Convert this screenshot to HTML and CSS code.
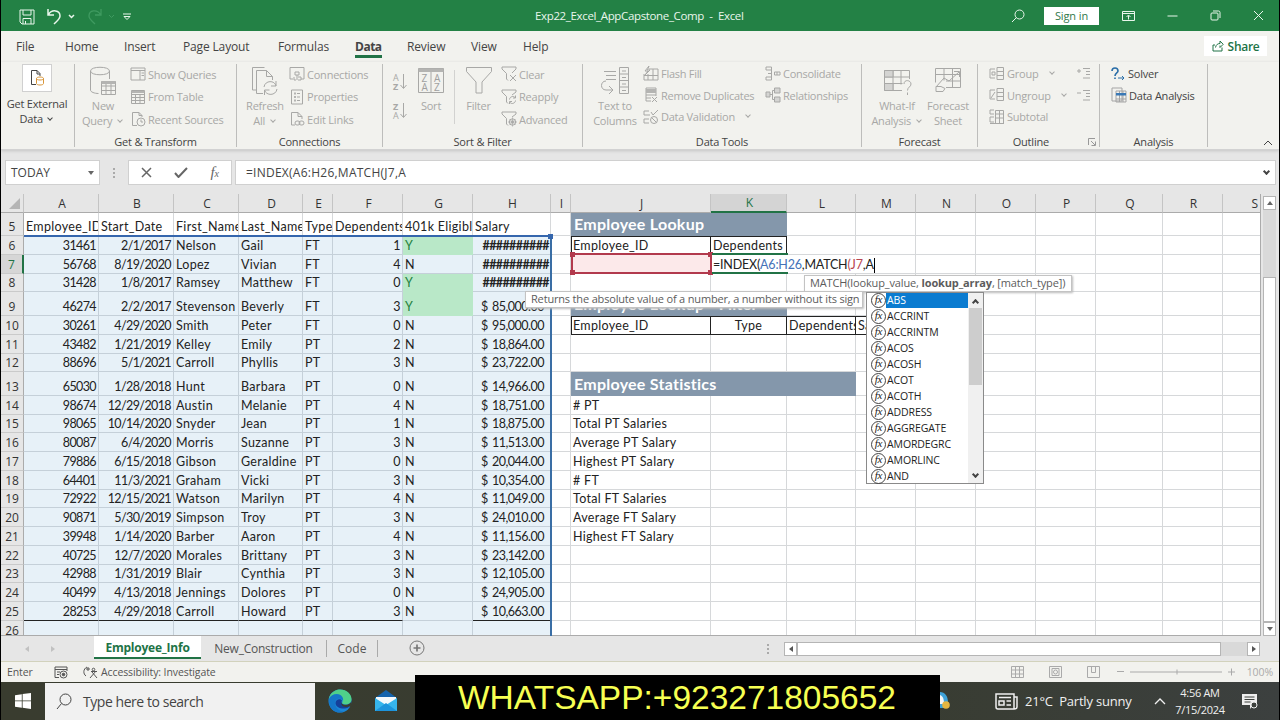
FILE: index.html
```html
<!DOCTYPE html>
<html lang="en">
<head>
    <meta charset="UTF-8">
    <title>Exp22_Excel_AppCapstone_Comp - Excel</title>
    <link rel="stylesheet" href="styles.css">
</head>
<body>
<div class="window">

    <!-- Title bar -->
    <header class="titlebar">
        <div class="quick">
            <svg width="16" height="16" viewBox="0 0 16 16"><path d="M1 1h14v14H3l-2-2zM4 1v5h8V1M4 15V9.500h8V15M6.500 15v-3"/></svg>
            <svg class="undo" width="15" height="17" viewBox="0 0 15 17"><path d="M1 1v6h6M1.500 6.500C5 1 13 2 13 8c0 3-3 5-6 8" stroke-width="1.500"/></svg>
            <svg class="small" width="7" height="5" viewBox="0 0 7 5"><path d="M1 1l2.500 2.500L6 1" stroke-width="1.500"/></svg>
            <svg class="redo" width="15" height="17" viewBox="0 0 15 17"><path d="M14 1v6H8M13.500 6.500C10 1 2 2 2 8c0 3 3 5 6 8" stroke-width="1.300"/></svg>
            <svg class="redo" width="7" height="5" viewBox="0 0 7 5"><path d="M1 1l2.500 2.500L6 1"/></svg>
            <svg class="more" width="8" height="8" viewBox="0 0 8 8"><path d="M0 1h8M1 3.500h6L4 6.500z"/></svg>
        </div>
        <div class="doc-name">Exp22_Excel_AppCapstone_Comp&nbsp; -&nbsp; Excel</div>
        <div class="win-tools">
            <svg width="14" height="14" viewBox="0 0 14 14"><circle cx="8.500" cy="5.500" r="4.500"/><path d="M5.500 8.500L1 13"/></svg>
            <button class="signin">Sign in</button>
            <svg width="13" height="10" viewBox="0 0 13 10"><path d="M.5.500h12v9H.5zM.5 2.500h12M6.500 8.500v-4M4.500 6l2-2 2 2"/></svg>
            <svg width="11" height="10" viewBox="0 0 11 10"><path d="M.5 5h10"/></svg>
            <svg width="11" height="11" viewBox="0 0 11 11"><rect x="1" y="3" width="7" height="7" rx="1"/><path d="M3 1h5.500q1.500 0 1.500 1.500V8"/></svg>
            <svg width="11" height="11" viewBox="0 0 11 11"><path d="M1 1l9 9M10 1l-9 9"/></svg>
        </div>
    </header>

    <!-- Tabs -->
    <nav class="tabs">
        <span>File</span><span>Home</span><span>Insert</span><span>Page Layout</span><span>Formulas</span>
        <span><b class="active">Data</b></span><span>Review</span><span>View</span><span>Help</span>
        <button class="share">
            <svg width="12" height="12" viewBox="0 0 12 12"><path d="M3 5H1v6h9V7.500M3.500 7.500C4 4.500 6 3.500 8 3.500V1l3.200 3.300L8 7.500V5.500"/></svg>
            Share
        </button>
    </nav>

    <!-- Ribbon -->
    <div class="ribbon">
        <section class="group g-external">
            <div class="body">
                <div class="big on">
                    <div class="boxed"><svg width="15" height="18" viewBox="0 0 15 18"><path d="M6 15.500H1.500v-14H7l3 3V7M7 1.500v3.500h3"/><path class="orange" d="M6.500 9.500v5c0 2 7 2 7 0v-5c0-2-7-2-7 0c0 2 7 2 7 0"/></svg></div>
                    <span>Get External<br>Data <i class="chev"></i></span>
                </div>
            </div>
            <h6></h6>
        </section>

        <section class="group g-transform">
            <div class="body">
                <div class="big">
                    <svg width="28" height="32" viewBox="0 0 28 32"><path d="M1.500 5v19c0 2 4 3.500 8 3.500M20.500 5v8M1.500 5c0-5 19-5 19 0c0 5-19 5-19 0M12.500 15.500h14v13h-14zM12.500 20h14M12.500 24.500h14M17 15.500v13M22 15.500v13"/><path class="fill" d="M12.500 15h14v3h-14z"/></svg>
                    <span>New<br>Query <i class="chev"></i></span>
                </div>
                <div class="list">
                    <div><svg width="16" height="16" viewBox="0 0 16 16"><path d="M1 2h14v12H1zM1 4.500h14M10 4.500V14M11.500 7H14M11.500 9.500H14"/></svg>Show Queries</div>
                    <div><svg width="16" height="16" viewBox="0 0 16 16"><path d="M1.500 1.500h13v13h-13zM1.500 5.500h13M1.500 8.500h13M1.500 11.500h13M5.500 5.500v9M10 5.500v9"/><path class="fill" d="M1.500 2h13v2h-13z"/></svg>From Table</div>
                    <div><svg width="16" height="16" viewBox="0 0 16 16"><path d="M7 14.500H2.500v-13H9l3 3V6M9 1.500v3h3"/><circle cx="11" cy="11" r="4"/><path d="M11 8.500V11h2"/></svg>Recent Sources</div>
                </div>
            </div>
            <h6>Get &amp; Transform</h6>
        </section>

        <section class="group g-connections">
            <div class="body">
                <div class="big">
                    <svg width="28" height="32" viewBox="0 0 28 32"><path d="M5 24H1.500V1.500h12M12 27.500H5.500v-23h10l6 6V14M15.500 4.500v6h6M13 21c1-7 11-7 12-1M25 15v5h-5M26 23c-1 7-11 7-12.500 1M13.500 29v-5h5"/></svg>
                    <span>Refresh<br>All <i class="chev"></i></span>
                </div>
                <div class="list">
                    <div><svg width="16" height="16" viewBox="0 0 16 16"><path d="M4 13H1V1.500h14V13h-3M5 11v3h2M9 11h3v3H9M6 6h4v3H6zM8 9v5"/></svg>Connections</div>
                    <div><svg width="16" height="16" viewBox="0 0 16 16"><path d="M2.500 1h11v14h-11zM8 4.500h3M8 8h3M8 11.500h3"/><path class="fill" d="M5 3.500h2v2H5zM5 7h2v2H5zM5 10.500h2v2H5z"/></svg>Properties</div>
                    <div><svg width="16" height="16" viewBox="0 0 16 16"><path d="M6 14H2.500V1.500H9l4 4V8M9 1.500v4h4"/><rect x="6" y="10" width="5" height="4" rx="2"/><rect x="10" y="10" width="5" height="4" rx="2"/></svg>Edit Links</div>
                </div>
            </div>
            <h6>Connections</h6>
        </section>

        <section class="group g-sort">
            <div class="body">
                <div class="az">
                    <div><span>A<br><b>Z</b></span><svg width="7" height="16" viewBox="0 0 7 16"><path d="M3.500 0v14M.5 11l3 3.500 3-3.500"/></svg></div>
                    <div><span><b>Z</b><br>A</span><svg width="7" height="16" viewBox="0 0 7 16"><path d="M3.500 0v14M.5 11l3 3.500 3-3.500"/></svg></div>
                </div>
                <div class="big sort">
                    <svg width="28" height="32" viewBox="0 0 28 32"><path d="M1.500 2.500h25v24h-25zM14 6v20.500"/><path class="fill" d="M1.500 2.500h25V6h-25z"/><g class="letters"><text x="4.500" y="15.500">Z</text><text x="4.500" y="25">A</text><text x="17" y="15.500">A</text><text x="17" y="25">Z</text></g></svg>
                    <span>Sort</span>
                </div>
                <div class="thin"></div>
                <div class="big filter">
                    <svg width="28" height="32" viewBox="0 0 28 32"><path d="M1.500 1.500h25v4L17 16v11h-6V16L1.500 5.500z"/></svg>
                    <span>Filter</span>
                </div>
                <div class="list">
                    <div><svg width="16" height="16" viewBox="0 0 16 16"><path d="M7 14.500L5.500 13V7.500L1 3V1h14v2l-4 4M9 9l6 6M15 9l-6 6"/></svg>Clear</div>
                    <div><svg width="16" height="16" viewBox="0 0 16 16"><path d="M7 14.500L5.500 13V7.500L1 3V1h14v2l-4 3M14.500 9c-2-3-6-1-6 1.500M14.500 6.500V9H12M8.500 13c2 3 6 1 6-1.500M8.500 15v-2.500H11"/></svg>Reapply</div>
                    <div><svg width="16" height="16" viewBox="0 0 16 16"><path d="M7 14.500L5.500 13V7.500L1 3V1h14v2l-4 3"/><circle cx="11.500" cy="11" r="3.200"/><circle cx="11.500" cy="11" r="1"/><path d="M11.500 6.500v9M7 11h9M8.500 8l6 6M14.500 8l-6 6" stroke-width=".7"/></svg>Advanced</div>
                </div>
            </div>
            <h6>Sort &amp; Filter</h6>
        </section>

        <section class="group g-tools">
            <div class="body">
                <div class="big">
                    <svg width="30" height="32" viewBox="0 0 30 32"><path d="M4 5.500h12M6 9.500h10M6 13.500h10M6 15c-6 0-6 9 0 9h6M9 20l4 4-4 4M19.500 1.500h9v26h-9zM19.500 8h9M19.500 14.500h9M19.500 21h9M22 5h4M22 11.500h4M22 18h4M22 24.500h4"/></svg>
                    <span>Text to<br>Columns</span>
                </div>
                <div class="list">
                    <div><svg width="16" height="16" viewBox="0 0 16 16"><path d="M6 3h9v11H1V8M5 14V8M10 3v11M1 9.500h14M6 0L2 5h3L2 9l5-5H4.500z"/></svg>Flash Fill</div>
                    <div><svg width="16" height="16" viewBox="0 0 16 16"><path d="M8 14H3V1h10v8M3 8h10M3 11h5M9 10l5 5M14 10l-5 5"/><path class="fill" d="M3 2h10v4H3z"/></svg>Remove Duplicates</div>
                    <div class="wide"><svg width="16" height="16" viewBox="0 0 16 16"><path d="M6 2H1v4h6M6 10H1v4h5M8 3l2 3 5-5"/><circle cx="11" cy="11" r="3.500"/><path d="M8.500 8.500l5 5"/></svg>Data Validation <i class="chev"></i></div>
                </div>
                <div class="list second">
                    <div><svg width="16" height="16" viewBox="0 0 16 16"><path d="M1 1h5.500v13H1M1 1v3h5.500M1 14v-3h5.500M3 7.500h4M9.500 6h5.500v3H9.500zM12 6v3"/></svg>Consolidate</div>
                    <div><svg width="16" height="16" viewBox="0 0 16 16"><path class="gray" d="M1 5h4v5H1zM9.500 1H15v5H9.500zM9.500 10H15v5H9.500z"/><path d="M5 7.500h2.500M9.500 3.500h-2v9h2"/></svg>Relationships</div>
                </div>
            </div>
            <h6>Data Tools</h6>
        </section>

        <section class="group g-forecast">
            <div class="body">
                <div class="big">
                    <svg width="29" height="32" viewBox="0 0 29 32"><path d="M19 24.500H1.500v-20h25V13M1.500 11h25M1.500 17.500h18M10 4.500v20M18 4.500v14M21 18c0-5 7-4 7 0c0 3-3.500 3-3.500 6.500M24.500 26.500v2.500"/><path class="gray" d="M1.500 4.500H10V11H1.500zM1.500 17.500H10v7H1.500z"/></svg>
                    <span>What-If<br>Analysis <i class="chev"></i></span>
                </div>
                <div class="big sheet-btn">
                    <svg width="28" height="32" viewBox="0 0 28 32"><path d="M1.500 2.500h25v19H12M1.500 2.500v14M1.500 8.500h25M12 15h14.500M10 2.500v12M18.500 2.500v19M2 21l8-9 5 3 10-9M20 5.500h5.500V11M2 25.500v-5h5l4 2-2 3z"/></svg>
                    <span>Forecast<br>Sheet</span>
                </div>
            </div>
            <h6>Forecast</h6>
        </section>

        <section class="group g-outline">
            <div class="body">
                <div class="list">
                    <div><svg width="16" height="16" viewBox="0 0 16 16"><path d="M6 3H1v9h5M3 6h3v3H3zM8 1.500h6.500v12H8zM8 5.500h6.500M8 9.500h6.500"/></svg>Group <i class="chev"></i></div>
                    <div><svg width="16" height="16" viewBox="0 0 16 16"><path d="M6 3H1v9h5M2 11l4-6M8 1.500h6.500v12H8zM8 5.500h6.500M8 9.500h6.500"/></svg>Ungroup <i class="chev"></i></div>
                    <div><svg width="16" height="16" viewBox="0 0 16 16"><path d="M1 1h4M1 1v4h4M1 8h4M1 8v5h4M6.500 1.500h8v13h-8zM1 14.500h14M6.500 5h8M6.500 9h8M10.500 1.500v13"/></svg>Subtotal</div>
                </div>
                <div class="plusminus">
                    <svg width="14" height="13" viewBox="0 0 14 13"><path d="M0 4h4M2 2v4M6 1.500h7M9 4.500h4M9 7.500h4M6 11h7"/></svg>
                    <svg width="14" height="13" viewBox="0 0 14 13"><path d="M0 4h4M6 1.500h7M9 4.500h4M9 7.500h4M6 11h7"/></svg>
                </div>
            </div>
            <h6>Outline <svg width="8" height="8" viewBox="0 0 8 8"><path d="M.5 7V.5H7M3 3l4 4M7.500 3.500v4h-4"/></svg></h6>
        </section>

        <section class="group g-analysis">
            <div class="body">
                <div class="list on">
                    <div><svg class="blue" width="14" height="14" viewBox="0 0 14 14"><path d="M1 4c0-4 6-4 6 0c0 2-3 2-3 5M4 10.500V12" stroke-width="1.600"/><path d="M7 11h6M11 9l2 2-2 2"/></svg>Solver</div>
                    <div><svg width="16" height="16" viewBox="0 0 16 16"><path class="light" d="M1 1h10v13H1zM5 4h10v11H5zM5 12h10M8.500 4v11M12 4v11"/><path class="bluefill" d="M5 6h10v2.500H5z"/></svg>Data Analysis</div>
                </div>
            </div>
            <h6>Analysis</h6>
        </section>
        <svg class="collapse" width="10" height="6" viewBox="0 0 10 6"><path d="M1 5l4-4 4 4"/></svg>
    </div>

    <!-- Formula bar -->
    <div class="formula-row">
        <div class="name-box">TODAY <i class="tri"></i></div>
        <div class="dots"><i></i><i></i><i></i></div>
        <div class="fx-box">
            <svg width="11" height="11" viewBox="0 0 11 11"><path d="M1 1l9 9M10 1l-9 9" stroke-width="1.500"/></svg>
            <svg width="14" height="11" viewBox="0 0 14 11"><path d="M1 6l3.500 4L13 1" stroke-width="2"/></svg>
            <em>f<small>x</small></em>
        </div>
        <div class="formula">=INDEX(A6:H26,MATCH(J7,A <i class="chev"></i></div>
    </div>

    <!-- Worksheet -->
    <div class="work">
        <div class="sheet" id="sheet"></div>
        <div class="range"><i></i></div>
        <div class="ref-cell"><i></i><i></i><i></i><i></i></div>
        <div class="edit">=INDEX(<span class="c-blue">A6:H26</span>,MATCH<span class="c-red">(J7</span>,A<i></i></div>
        <div class="tip syntax">MATCH(lookup_value, <b>lookup_array</b>, [match_type])</div>
        <div class="tip desc">Returns the absolute value of a number, a number without its sign</div>
        <div class="suggest">
            <ul id="functions"></ul>
            <div class="suggest-bar"><i class="chev up"></i><div></div><i class="chev"></i></div>
        </div>
        <div class="vscroll">
            <div class="btn"><i class="tri up"></i></div>
            <div class="track"></div>
            <div class="thumb"></div>
            <div class="btn"><i class="tri"></i></div>
        </div>
    </div>

    <!-- Sheet tabs -->
    <div class="sheet-tabs">
        <div class="nav-arrows"><i class="tri left"></i><i class="tri right"></i></div>
        <b>Employee_Info</b>
        <span class="t2">New_Construction</span>
        <span class="t3">Code</span>
        <svg class="add" width="16" height="16" viewBox="0 0 16 16"><circle cx="8" cy="8" r="7"/><path d="M8 4.500v7M4.500 8h7" stroke-width="1.700"/></svg>
        <div class="dots"><i></i><i></i><i></i></div>
        <div class="hscroll">
            <div class="btn"><i class="tri left"></i></div>
            <div class="thumb"></div>
            <div class="track"></div>
            <div class="btn"><i class="tri right"></i></div>
        </div>
    </div>

    <!-- Status bar -->
    <div class="status">
        <span class="mode">Enter</span>
        <svg width="14" height="13" viewBox="0 0 14 13"><path d="M5 11.500H1V1h12v4M1 3.500h12M3 6h3M3 8.500h2"/><circle cx="9.500" cy="8.500" r="3.500"/><circle cx="9.500" cy="8.500" r="1.300" fill="#555"/></svg>
        <svg class="acc" width="15" height="13" viewBox="0 0 15 13"><path d="M4 1C0 3 0 8 3 10M5 1v4M3 3h4M9 6l5 6M13 5l-6 7M8 5.500h6"/><circle cx="10.500" cy="3.500" r="1.300"/></svg>
        <span>Accessibility: Investigate</span>
        <div class="views">
            <svg width="13" height="12" viewBox="0 0 13 12"><path d="M.5.500h12v11H.5zM.5 4h12M.5 8h12M4.500.500v11M8.500.500v11"/></svg>
            <svg width="13" height="12" viewBox="0 0 13 12"><path d="M.5.500h12v11H.5zM3 2.500h7v7H3z"/><circle cx="6.500" cy="6" r="2"/></svg>
            <svg width="13" height="12" viewBox="0 0 13 12"><path d="M.5.500h12v11H.5zM4.500.500v6h4v-6"/></svg>
            <svg width="118" height="10" viewBox="0 0 118 10"><path d="M0 4.500h7M13 5h92M60 2.500v5M111 5h7M114.500 1.500v7"/></svg>
            <span>100%</span>
        </div>
    </div>

    <!-- Windows taskbar -->
    <footer class="taskbar">
        <div class="start"><svg width="16" height="16" viewBox="0 0 16 16"><path d="M0 2.200L6.800 1.200V7.500H0zM7.600 1.100L16 0v7.500H7.600zM0 8.300h6.800v6.400L0 13.800zM7.600 8.300H16V16l-8.400-1.200z"/></svg></div>
        <div class="search">
            <svg width="16" height="17" viewBox="0 0 16 17"><circle cx="9.500" cy="6.500" r="5.500"/><path d="M5.500 10.500L1 16"/></svg>
            Type here to search
        </div>
        <svg class="edge" width="24" height="24" viewBox="0 0 24 24">
            <circle cx="12" cy="12" r="11.500" fill="#1b86d6"/>
            <path d="M1 10C2 3 8 .5 12 .5c7 0 11.500 5 11.500 9.500c0 4-3 5.500-6 5.500c-3 0-4-1-3-2.500C16 9 12 6 8 7c-3 .5-6 2-7 3z" fill="#4fd08a"/>
            <path d="M1 10C3 5 9 4 12.500 6c2 1.500 3 3.500 2.500 5.500C13 8 7 9 7 14c0 5 5 8.500 9 8.500C7 26 0 19 1 10z" fill="#1577c9"/>
            <path d="M7.500 14c0-4 5-5 6.500-2.500c-1 2-.5 4 3 4.500c3 .3 4.500-.5 6-1.500c-1 4-4 5-7 5c-5 0-8.500-2-8.500-5.500z" fill="#15409a"/>
            <path d="M14 13c-.8 2 1 3 4 2.800c2.500-.2 4.500-1.300 5.300-3.300L24 17l-6 1c-4 0-5.500-3-4-5z" fill="#3a3d31"/>
        </svg>
        <svg class="mail" width="24" height="22" viewBox="0 0 24 22">
            <path d="M1 8L12 0l11 8v13H1z" fill="#1463ad"/>
            <path d="M2 7h20v10H2z" fill="#f4f8fb"/>
            <path d="M1 8l11 7 11-7v13H1z" fill="#36b5ec"/>
            <path d="M1 21l11-8 11 8z" fill="#1d94dc"/>
        </svg>
        <div class="banner">WHATSAPP:+923271805652</div>
        <svg class="app" width="10" height="20" viewBox="0 0 10 20"><path d="M0 1c5 0 8 4 8 11l-2 5H0z" fill="#3fa2d8"/><path d="M0 4c3 1 4 4 4 9H0z" fill="#f4f4f4"/><circle cx="6" cy="14" r="3.800" fill="#e5b53f"/></svg>
        <svg class="news" width="23" height="17" viewBox="0 0 23 17"><path d="M1 1h18v15H3q-2 0-2-2zM19 4h3v10q0 2-3 2M4 4.500h12M4 8h5v4H4zM11.500 8H16M11.500 12H16" stroke-width="1.500"/></svg>
        <span class="weather">21°C &nbsp;Partly sunny</span>
        <svg class="tray" width="12" height="7" viewBox="0 0 12 7"><path d="M1 6l5-5 5 5" stroke-width="1.300"/></svg>
        <div class="clock">4:56 AM<br>7/15/2024</div>
        <svg class="notes" width="17" height="17" viewBox="0 0 17 17"><path d="M1 1h15v11h-4l-3 4v-4H1z" fill="#eee" stroke="none"/><path d="M3.500 4h10M3.500 6.500h10M3.500 9h6" stroke="#3c403c"/><circle cx="13" cy="12" r="3" fill="#3c403c"/></svg>
    </footer>
</div>

<script>
    const letters = 'ABCDEFGHIJKLMNOPQRS'.split('');

    // first row is the header, the rest are employees
    const staff = {
        5: ['Employee_ID', 'Start_Date', 'First_Name', 'Last_Name', 'Type', 'Dependents', '401k Eligible', 'Salary'],
        6: ['31461', '2/1/2017', 'Nelson', 'Gail', 'FT', '1', 'Y', '##########'],
        7: ['56768', '8/19/2020', 'Lopez', 'Vivian', 'FT', '4', 'N', '##########'],
        8: ['31428', '1/8/2017', 'Ramsey', 'Matthew', 'FT', '0', 'Y', '##########'],
        9: ['46274', '2/2/2017', 'Stevenson', 'Beverly', 'FT', '3', 'Y', '$ 85,000.00'],
        10: ['30261', '4/29/2020', 'Smith', 'Peter', 'FT', '0', 'N', '$ 95,000.00'],
        11: ['43482', '1/21/2019', 'Kelley', 'Emily', 'PT', '2', 'N', '$ 18,864.00'],
        12: ['88696', '5/1/2021', 'Carroll', 'Phyllis', 'PT', '3', 'N', '$ 23,722.00'],
        13: ['65030', '1/28/2018', 'Hunt', 'Barbara', 'PT', '0', 'N', '$ 14,966.00'],
        14: ['98674', '12/29/2018', 'Austin', 'Melanie', 'PT', '4', 'N', '$ 18,751.00'],
        15: ['98065', '10/14/2020', 'Snyder', 'Jean', 'PT', '1', 'N', '$ 18,875.00'],
        16: ['80087', '6/4/2020', 'Morris', 'Suzanne', 'PT', '3', 'N', '$ 11,513.00'],
        17: ['79886', '6/15/2018', 'Gibson', 'Geraldine', 'PT', '0', 'N', '$ 20,044.00'],
        18: ['64401', '11/3/2021', 'Graham', 'Vicki', 'PT', '3', 'N', '$ 10,354.00'],
        19: ['72922', '12/15/2021', 'Watson', 'Marilyn', 'PT', '4', 'N', '$ 11,049.00'],
        20: ['90871', '5/30/2019', 'Simpson', 'Troy', 'PT', '3', 'N', '$ 24,010.00'],
        21: ['39948', '1/14/2020', 'Barber', 'Aaron', 'PT', '4', 'N', '$ 11,156.00'],
        22: ['40725', '12/7/2020', 'Morales', 'Brittany', 'PT', '3', 'N', '$ 23,142.00'],
        23: ['42988', '1/31/2019', 'Blair', 'Cynthia', 'PT', '3', 'N', '$ 12,105.00'],
        24: ['40499', '4/13/2018', 'Jennings', 'Dolores', 'PT', '0', 'N', '$ 24,905.00'],
        25: ['28253', '4/29/2018', 'Carroll', 'Howard', 'PT', '3', 'N', '$ 10,663.00']
    };

    // titles are merged over the next cells, null = covered cell
    const other = {
        J5: ['Employee Lookup', 'title two'], K5: null,
        J6: ['Employee_ID', 'box first top'], K6: ['Dependents', 'box top'],
        J9: ['Employee Lookup - Filter', 'title two'], K9: null,
        J10: ['Employee_ID', 'box first top'], K10: ['Type', 'box top center'], L10: ['Dependents', 'box top'], M10: ['Salary', 'box top'],
        J13: ['Employee Statistics', 'title three'], K13: null, L13: null,
        J14: ['# PT', ''], J15: ['Total PT Salaries', ''], J16: ['Average PT Salary', ''], J17: ['Highest PT Salary', ''],
        J18: ['# FT', ''], J19: ['Total FT Salaries', ''], J20: ['Average FT Salary', ''], J21: ['Highest FT Salary', '']
    };

    const sheet = document.getElementById('sheet');

    function addCell(text, clase) {
        const div = document.createElement('div');
        div.className = clase;
        const span = document.createElement('span');
        span.textContent = text;
        div.appendChild(span);
        sheet.appendChild(div);
    }

    addCell('', 'corner');
    letters.forEach(l => addCell(l, 'col-head' + (l === 'K' ? ' current' : '') + (l === 'S' ? ' last' : '')));

    for (let r = 5; r <= 26; r++) {
        addCell(r, 'row-head' + (r === 7 ? ' current' : ''));
        letters.forEach((l, c) => {
            let text = '';
            let clase = 'cell';
            if (other[l + r] === null) return;
            if (c < 8) {
                if (staff[r]) text = staff[r][c];
                if (r > 5) {
                    clase += ' in-range';
                    if (c === 0 || c === 1 || c === 5) clase += ' num';
                    if (c === 7) clase += text[0] === '#' ? ' hash' : ' money';
                    if (text === 'Y') clase += ' yes';
                }
                if (r === 25 && c !== 6) clase += ' end';
            } else if (other[l + r]) {
                text = other[l + r][0];
                clase += ' ' + other[l + r][1];
            }
            addCell(text, clase);
        });
    }

    const names = ['ABS', 'ACCRINT', 'ACCRINTM', 'ACOS', 'ACOSH', 'ACOT', 'ACOTH', 'ADDRESS', 'AGGREGATE', 'AMORDEGRC', 'AMORLINC', 'AND'];
    const list = document.getElementById('functions');
    names.forEach((name, i) => {
        const li = document.createElement('li');
        if (i === 0) li.className = 'selected';
        li.innerHTML = '<em>fx</em><span>' + name + '</span>';
        list.appendChild(li);
    });
</script>
</body>
</html>
```
FILE: styles.css
```css
* {
    box-sizing: border-box;
}

body {
    margin: 0;
    background-color: #000;
    font-family: "Open Sans", "Noto Sans", sans-serif;
    font-size: 11.5px;
    color: #444;
}

svg {
    display: block;
    flex: none;
    fill: none;
    stroke: currentColor;
}

button {
    font-family: inherit;
    border: none;
    padding: 0;
}

i {
    display: inline-block;
    font-style: normal;
}

.window {
    width: 1278px;
    height: 720px;
    margin-left: 1px;
    overflow: hidden;
    background-color: #e6e6e6;
    display: flex;
    flex-direction: column;
}

/* small arrows */
.chev {
    width: 4px;
    height: 4px;
    border-right: 1px solid currentColor;
    border-bottom: 1px solid currentColor;
    transform: rotate(45deg);
    margin: 0 2px 3px 3px;
}

.chev.up {
    transform: rotate(225deg);
}

.tri {
    border: 3.5px solid transparent;
    border-top: 4px solid #666;
    border-bottom: 0;
}

.tri.up {
    border-top: 0;
    border-bottom: 4px solid #666;
}

.tri.left {
    border: 3.5px solid transparent;
    border-right: 4px solid #555;
    border-left: 0;
}

.tri.right {
    border: 3.5px solid transparent;
    border-left: 4px solid #555;
    border-right: 0;
}

/* title bar */
.titlebar {
    height: 31px;
    flex: none;
    background-color: #238145;
    color: #e9f6ec;
    display: grid;
    grid-template-columns: 480px 1fr 270px;
    align-items: center;
}

.quick {
    display: flex;
    align-items: center;
    padding: 2px 0 0 18px;
}

.quick .undo { margin-left: 12px; }
.quick .small { margin-left: 6px; }
.quick .redo { margin-left: 12px; color: #3f9a60; }
.quick .redo + .redo { margin-left: 6px; }
.quick .more { margin-left: 8px; }

.doc-name {
    padding-left: 54px;
    letter-spacing: -0.35px;
}

.win-tools {
    display: flex;
    align-items: center;
    padding-left: 2px;
}

.signin {
    width: 55px;
    height: 18px;
    margin: 0 23px 0 19px;
    background-color: #fff;
    color: #32794b;
    font-size: 11px;
    letter-spacing: -0.1px;
}

.win-tools svg + svg { margin-left: 32px; }

/* tabs */
.tabs {
    height: 31px;
    flex: none;
    background-color: #f2f2ee;
    display: grid;
    grid-template-columns: 49px 59px 59px 95px 77px 52px 64px 52px 1fr 69px;
    padding: 0 6px 0 15px;
    font-size: 12px;
    letter-spacing: -0.15px;
    line-height: 31px;
    white-space: nowrap;
}

.active {
    display: inline-block;
    height: 27px;
    border-bottom: 3px solid #217346;
    letter-spacing: -0.5px;
}

.share {
    height: 20px;
    margin-top: 5px;
    grid-column: 10;
    width: 63px;
    background-color: #fff;
    color: #217346;
    font-size: 12px;
    font-weight: 600;
    letter-spacing: -0.3px;
    display: flex;
    align-items: center;
    justify-content: center;
    gap: 4px;
}

/* ribbon */
.ribbon {
    height: 88px;
    flex: none;
    background-color: #f2f2ee;
    display: flex;
    padding-top: 2px;
    border-bottom: 1px solid #d2d2d2;
    position: relative;
    box-shadow: 0 1px 3px #c4c4c4;
}

.group {
    height: 83px;
    border-right: 1px solid #bdbdbb;
    display: flex;
    flex-direction: column;
    flex: none;
    color: #a8a8a6;
    font-size: 11px;
    letter-spacing: -0.22px;
}

.group .body {
    display: flex;
    flex: none;
    height: 70px;
}

.group h6 {
    flex: none;
    margin: 0;
    height: 16px;
    line-height: 16px;
    text-align: center;
    font-size: 11px;
    font-weight: normal;
    letter-spacing: -0.2px;
    color: #444;
}

.g-external { width: 74px; }
.g-transform { width: 162px; }
.g-connections { width: 146px; }
.g-sort { width: 200px; }
.g-tools { width: 279px; }
.g-forecast { width: 116px; }
.g-outline { width: 122px; }
.g-analysis { width: 108px; }

.big {
    display: flex;
    flex-direction: column;
    align-items: center;
    flex: none;
    width: 56px;
    padding-top: 2px;
    text-align: center;
    line-height: 15px;
    white-space: nowrap;
}

.on {
    color: #444;
}

.g-external .big {
    width: 72px;
    padding-top: 0;
}

.boxed {
    width: 30px;
    height: 28px;
    border: 1px solid #d0d0d0;
    background-color: #fff;
    margin-bottom: 4px;
    display: flex;
    align-items: center;
    justify-content: center;
}

.orange { stroke: #d8963a; }
.fill { fill: #b4b4b2; stroke: none; }
.gray { fill: #d4d4d2; }
.blue { color: #2a6ea8; margin-right: 1px; }
.bluefill { fill: #3b79b5; stroke: none; }
.light { stroke: #a5a5a5; }

.list {
    display: flex;
    flex-direction: column;
    flex: none;
    white-space: nowrap;
    margin-top: -1px;
}

.list div {
    height: 22.5px;
    display: flex;
    align-items: center;
    gap: 2px;
}

.g-transform .big { margin-left: 1px; width: 54px; }
.g-connections .big { margin-left: 1px; width: 54px; }
.g-connections .list { margin-left: -3px; }

.az {
    width: 20px;
    margin-left: 10px;
    padding-top: 9px;
}

.az div {
    display: flex;
    align-items: center;
    gap: 2px;
    font-size: 9px;
    line-height: 9px;
    height: 29px;
    padding-bottom: 11px;
}

.sort { width: 36px; margin-left: 0; }
.letters { font: 10px "Open Sans"; fill: #a0a0a0; stroke: none; }

.thin {
    width: 1px;
    height: 54px;
    margin: 6px 0 0 5px;
    background-color: #d2d2d0;
}

.filter { width: 47px; }
.g-sort .list { margin-left: -1px; }

.g-tools .list div,
.g-outline .list div,
.g-analysis .list div {
    height: 21.6px;
}

.g-tools .big { width: 60px; margin-left: 2px; }
.g-tools .list { width: 122px; margin-left: -2px; letter-spacing: -0.28px; }
.g-tools .second { width: 90px; margin-left: 0; }
.wide .chev { margin-left: 9px; }

.g-forecast .big { width: 52px; margin-left: 9px; }
.g-forecast .sheet-btn { width: 50px; margin-left: 0; }

.g-outline .body { padding-left: 11px; }
.g-outline .list { width: 90px; }
.g-outline .list .chev { margin-left: 9px; }

.plusminus {
    display: flex;
    flex-direction: column;
    gap: 9px;
    padding-top: 3px;
    margin-left: -2px;
}

.g-outline h6 {
    display: flex;
    justify-content: flex-end;
    align-items: center;
    gap: 39px;
    padding-right: 3px;
}

.g-outline h6 svg { color: #999; }

.g-analysis .body { padding-left: 11px; }

.collapse {
    position: absolute;
    right: 6px;
    bottom: 3px;
    color: #444;
}

/* formula bar */
.formula-row {
    height: 44px;
    flex: none;
    padding: 10px 3px 9px 4px;
    display: flex;
    font-size: 12px;
    line-height: 23px;
}

.name-box,
.fx-box,
.formula {
    height: 25px;
    background-color: #fff;
    border: 1px solid #d0d0d0;
}

.name-box {
    width: 95px;
    padding: 0 5px;
    display: flex;
    justify-content: space-between;
    align-items: center;
}

.dots {
    width: 28px;
    display: flex;
    flex-direction: column;
    align-items: center;
    justify-content: center;
    gap: 2px;
}

.dots i {
    width: 2px;
    height: 2px;
    background-color: #aaa;
}

.fx-box {
    width: 104px;
    display: flex;
    align-items: center;
    justify-content: space-between;
    padding: 0 12px 0 12px;
    color: #666;
}

.fx-box em {
    font-family: "Liberation Serif", serif;
    font-size: 15px;
}

.fx-box small { font-size: 10px; }

.formula {
    flex: 1;
    margin-left: 3px;
    padding: 0 4px 0 10px;
    display: flex;
    justify-content: space-between;
    align-items: center;
    letter-spacing: 0.25px;
}

.formula .chev { width: 5px; height: 5px; border-width: 0 2px 2px 0; }

/* worksheet */
.work {
    position: relative;
    height: 442px;
    flex: none;
    font-family: Lato, "Open Sans", sans-serif;
    font-variant-ligatures: none;
}

.sheet {
    width: 1260px;
    height: 442px;
    overflow: hidden;
    display: grid;
    grid-template-columns: 23px 75px 75px 65px 64px 30px 70px 70px 78px 20px 140px 76px 69px 60px 60px 60px 60px 67px 60px 38px;
    grid-template-rows: 19px 23.2px repeat(3, 18.75px) 23.7px repeat(3, 18.75px) 23.6px repeat(13, 18.75px);
    border-bottom: 1px solid #ababab;
    border-right: 1px solid #ababab;
    font-size: 12.5px;
    letter-spacing: 0.3px;
    line-height: 17px;
    color: #222;
}

.col-head,
.row-head,
.corner {
    font-family: "Open Sans", sans-serif;
    letter-spacing: 0;
    background-color: #e6e6e6;
    display: flex;
    align-items: center;
    justify-content: center;
    color: #333;
    font-size: 12px;
}

.col-head {
    border-right: 1px solid #c4c4c4;
    border-bottom: 1px solid #ababab;
    padding-left: 2px;
}

.col-head.last {
    border-right: 0;
    justify-content: flex-end;
    padding-right: 3px;
}

.row-head {
    align-items: flex-end;
    border-bottom: 1px solid #cacaca;
    border-right: 1px solid #ababab;
}

.col-head.current {
    background-color: #d4d4d4;
    color: #217346;
    border-bottom: 2px solid #217346;
}

.row-head.current {
    background-color: #d6d6d6;
    color: #217346;
    border-right: 2px solid #217346;
}

.corner {
    border-bottom: 1px solid #ababab;
    border-right: 1px solid #c4c4c4;
}

.corner span {
    border-left: 11px solid transparent;
    border-bottom: 11px solid #b5b5b5;
    margin-left: 5px;
}

.cell {
    background-color: #fff;
    border-right: 1px solid #d6d8da;
    border-bottom: 1px solid #d6d8da;
    display: flex;
    align-items: flex-end;
    padding: 0 2px;
    overflow: hidden;
    white-space: nowrap;
    min-width: 0;
}

.cell span {
    flex: none;
}

.in-range {
    background-color: #e7f1f8;
    border-color: #c5d0d9;
}

.num {
    justify-content: flex-end;
    letter-spacing: -0.6px;
}

.money {
    justify-content: flex-end;
    padding-right: 6px;
    letter-spacing: -0.5px;
    word-spacing: 1.5px;
}

.hash {
    justify-content: flex-end;
    letter-spacing: -0.6px;
    padding-right: 1px;
    font-weight: bold;
}

.yes {
    background-color: #b9e8c8;
    border-color: #b9e8c8;
    color: #1f8040;
}

.end { border-bottom: 1px solid #222; }

.title {
    background-color: #8497ab;
    border-color: #8497ab;
    color: #fff;
    font-size: 16px;
    font-weight: bold;
    padding-left: 3px;
    align-items: center;
    letter-spacing: 0.25px;
    line-height: 20px;
}

.two { grid-column: span 2; }
.three { grid-column: span 3; }

.box {
    border-right: 1px solid #222;
    border-bottom: 1px solid #222;
}

.first { box-shadow: inset 1px 0 #222; }
.top { border-top: 1px solid #222; }
.center { justify-content: center; }

/* coloured ranges of the formula being typed */
.range {
    position: absolute;
    left: 23px;
    top: 41px;
    width: 528px;
    height: 410px;
    border-top: 2px solid #3566ad;
    border-right: 2px solid #3a6ea5;
    clip-path: inset(-4px -4px 9px 0);
}

.range i {
    position: absolute;
    right: -3px;
    top: -3px;
    width: 5px;
    height: 5px;
    background-color: #3566ad;
}

.ref-cell {
    position: absolute;
    left: 570px;
    top: 59px;
    width: 141px;
    height: 21px;
    border: 2px solid #b23a4d;
    background-color: #fce9ea;
}

.ref-cell i {
    position: absolute;
    width: 5px;
    height: 5px;
    background-color: #b23a4d;
    left: -3px;
    top: -3px;
}

.ref-cell i:nth-child(2) { left: auto; right: -3px; }
.ref-cell i:nth-child(3) { top: auto; bottom: -3px; }
.ref-cell i:nth-child(4) { left: auto; right: -3px; top: auto; bottom: -3px; }

.edit {
    position: absolute;
    left: 711px;
    top: 61px;
    height: 18px;
    line-height: 19px;
    background-color: #fff;
    color: #222;
    font-size: 12.5px;
    letter-spacing: -0.2px;
    white-space: nowrap;
    padding-left: 1px;
}

/* green outline only covers the width of the cell */
.edit::before {
    content: "";
    position: absolute;
    left: 0;
    top: -2px;
    width: 76px;
    height: 17px;
    border-top: 2px solid #217346;
    border-bottom: 2px solid #217346;
}

.edit i {
    width: 1px;
    height: 15px;
    background-color: #000;
    vertical-align: middle;
}

.c-blue { color: #4472b8; }
.c-red { color: #b8454f; }

.tip {
    position: absolute;
    height: 17px;
    line-height: 14px;
    border: 1px solid #c3c3c3;
    background-color: #fff;
    font-family: "Open Sans", sans-serif;
    font-size: 11px;
    color: #5c5c5c;
    white-space: nowrap;
    padding: 0 5px;
    box-shadow: 1px 1px 2px #bbb;
}

.syntax { left: 803px; top: 81px; width: 268px; letter-spacing: -0.14px; }
.desc { left: 524px; top: 97px; width: 338px; letter-spacing: -0.17px; }

.suggest {
    position: absolute;
    left: 865px;
    top: 98px;
    width: 118px;
    height: 192px;
    border: 1px solid #8a8a8a;
    background-color: #fff;
    display: flex;
    font-family: "Open Sans", sans-serif;
}

.suggest ul {
    list-style: none;
    margin: 0;
    padding: 0 0 0 4px;
    width: 101px;
}

.suggest li {
    height: 15.95px;
    display: flex;
    align-items: center;
    font-size: 10.5px;
    letter-spacing: -0.1px;
    color: #222;
}

.suggest em {
    width: 15px;
    height: 15px;
    border: 1px solid #444;
    border-radius: 50%;
    font: italic 11px/11px "Liberation Serif", serif;
    text-align: center;
    flex: none;
}

.suggest span {
    flex: 1;
    padding-left: 1px;
    line-height: 15px;
}

.suggest .selected span {
    background-color: #0a7bd0;
    color: #fff;
}

.suggest-bar {
    width: 15px;
    background-color: #f0f0f0;
    display: flex;
    flex-direction: column;
    align-items: center;
    color: #444;
}

.suggest-bar div {
    width: 13px;
    height: 77px;
    background-color: #cdcdcd;
    margin-bottom: auto;
}

.suggest-bar .chev {
    width: 5px;
    height: 5px;
    border-width: 0 2px 2px 0;
    margin: 0 0 6px;
}

.suggest-bar .up { margin: 7px 0 3px; }

.vscroll {
    position: absolute;
    left: 1262px;
    top: 2px;
    width: 14px;
    height: 440px;
    display: flex;
    flex-direction: column;
}

.btn {
    width: 13px;
    height: 14px;
    flex: none;
    background-color: #fff;
    border: 1px solid #b5b5b5;
    display: flex;
    align-items: center;
    justify-content: center;
}

.vscroll .track {
    height: 67px;
    background-color: #d9d9d9;
    width: 13px;
}

.vscroll .thumb {
    flex: 1;
    width: 13px;
    background-color: #fff;
    border: 1px solid #b5b5b5;
}

/* sheet tabs */
.sheet-tabs {
    height: 26px;
    flex: none;
    display: flex;
    border-bottom: 1px solid #d2d2bc;
    font-size: 12px;
    line-height: 24px;
    color: #555;
}

.nav-arrows {
    width: 93px;
    display: flex;
    align-items: center;
    gap: 22px;
    padding-left: 24px;
    opacity: 0.25;
}

.sheet-tabs b {
    width: 107px;
    height: 23px;
    background-color: #fff;
    border-bottom: 2px solid #217346;
    color: #217346;
    text-align: center;
    letter-spacing: -0.22px;
}

.t2,
.t3 {
    width: 126px;
    margin: 4px 0 4px;
    line-height: 17px;
    text-align: center;
    letter-spacing: -0.25px;
    border-right: 1px solid #aaa;
}

.t3 { width: 51px; letter-spacing: 0; }

.add {
    margin: 4px 0 0 31px;
    color: #777;
}

.sheet-tabs .dots {
    width: 10px;
    margin-left: 338px;
}

.hscroll {
    margin: 6px 0 0 11px;
    width: 476px;
    height: 14px;
    display: flex;
}

.hscroll .thumb {
    width: 424px;
    background-color: #fff;
    border: 1px solid #b5b5b5;
}

.hscroll .track {
    flex: 1;
    background-color: #d9d9d9;
}

/* status bar */
.status {
    height: 20px;
    flex: none;
    background-color: #f2f2ee;
    display: flex;
    align-items: center;
    font-size: 10.5px;
    letter-spacing: -0.1px;
    color: #555;
    padding: 0 6px;
}

.mode { width: 47px; }
.status .acc { margin: 0 3px 0 15px; }

.views {
    margin-left: auto;
    display: flex;
    align-items: center;
    gap: 25px;
    color: #aaa;
}

.views svg:nth-child(4) { margin-left: -8px; }
.views span { margin-left: -13px; }

/* taskbar */
.taskbar {
    height: 38px;
    flex: none;
    background: linear-gradient(90deg, #393c2f, #383c31 70%, #3c403f);
    display: flex;
    align-items: center;
    color: #f0f0f0;
}

.start {
    width: 44px;
    padding-left: 14px;
}

.start svg {
    fill: #fff;
    stroke: none;
}

.search {
    width: 270px;
    height: 37px;
    background-color: #f1f1f1;
    color: #444;
    font-size: 14px;
    letter-spacing: -0.45px;
    display: flex;
    align-items: center;
    gap: 11px;
    padding-left: 11px;
}

.edge { margin-left: 13px; }
.mail { margin-left: 22px; }
.edge, .mail, .app { stroke: none; }

.banner {
    width: 525px;
    height: 45px;
    margin: -7px 0 0 17px;
    background-color: #000;
    color: #f6ff52;
    font-family: "Liberation Sans", Arial, sans-serif;
    font-size: 33.5px;
    line-height: 46px;
    padding-left: 43px;
    white-space: nowrap;
    position: relative;
}

.news { margin-left: 45px; }

.weather {
    width: 136px;
    padding-left: 7px;
    font-size: 13px;
    letter-spacing: -0.2px;
    white-space: nowrap;
}

.clock {
    width: 70px;
    text-align: center;
    font-size: 11px;
    line-height: 17px;
    letter-spacing: -0.3px;
    margin-left: -1px;
}

.notes { margin-left: 6px; }
```
